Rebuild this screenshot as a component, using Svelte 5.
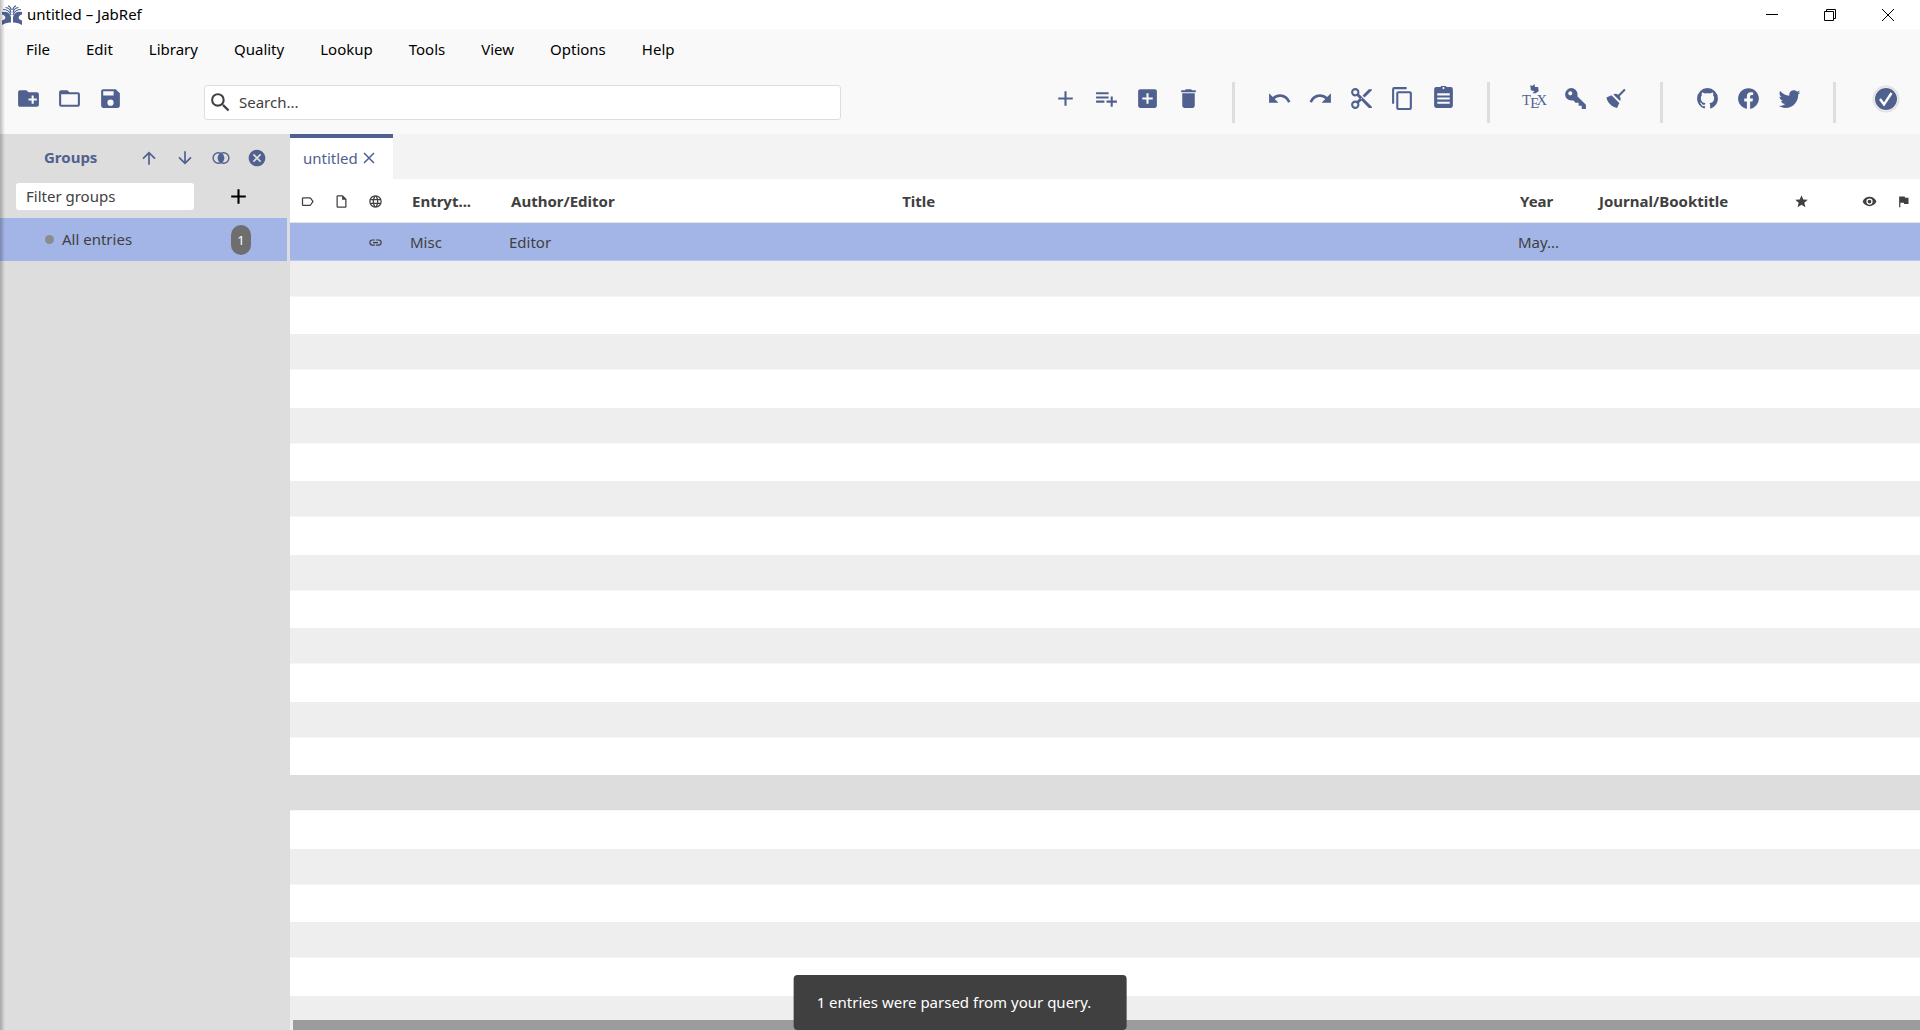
<script>
  const menus = ['File', 'Edit', 'Library', 'Quality', 'Lookup', 'Tools', 'View', 'Options', 'Help'];

  const icons = {
    newLibrary: 'M10,4L12,6H20A2,2 0 0,1 22,8V18A2,2 0 0,1 20,20H4C2.89,20 2,19.1 2,18V6C2,4.89 2.89,4 4,4H10M15,9V12H12V14H15V17H17V14H20V12H17V9H15Z',
    open: 'M20,18H4V8H20M20,6H12L10,4H4C2.89,4 2,4.89 2,6V18A2,2 0 0,0 4,20H20A2,2 0 0,0 22,18V8C22,6.89 21.1,6 20,6Z',
    save: 'M15,9H5V5H15M12,19A3,3 0 0,1 9,16A3,3 0 0,1 12,13A3,3 0 0,1 15,16A3,3 0 0,1 12,19M17,3H5C3.89,3 3,3.9 3,5V19A2,2 0 0,0 5,21H19A2,2 0 0,0 21,19V7L17,3Z',
    magnify: 'M9.5,3A6.5,6.5 0 0,1 16,9.5C16,11.11 15.41,12.59 14.44,13.73L14.71,14H15.5L20.5,19L19,20.5L14,15.5V14.71L13.73,14.44C12.59,15.41 11.11,16 9.5,16A6.5,6.5 0 0,1 3,9.5A6.5,6.5 0 0,1 9.5,3M9.5,5C7,5 5,7 5,9.5C5,12 7,14 9.5,14C12,14 14,12 14,9.5C14,7 12,5 9.5,5Z',
    plus: 'M19,13H13V19H11V13H5V11H11V5H13V11H19V13Z',
    playlistPlus: 'M2,16H10V14H2M18,14V10H16V14H12V16H16V20H18V16H22V14M14,6H2V8H14M14,10H2V12H14V10Z',
    plusBox: 'M17,13H13V17H11V13H7V11H11V7H13V11H17M19,3H5C3.89,3 3,3.89 3,5V19A2,2 0 0,0 5,21H19A2,2 0 0,0 21,19V5C21,3.89 20.1,3 19,3Z',
    trash: 'M19,4H15.5L14.5,3H9.5L8.5,4H5V6H19M6,19A2,2 0 0,0 8,21H16A2,2 0 0,0 18,19V7H6V19Z',
    undo: 'M12.5,8C9.85,8 7.45,9 5.6,10.6L2,7V16H11L7.38,12.38C8.77,11.22 10.54,10.5 12.5,10.5C16.04,10.5 19.05,12.81 20.1,16L22.47,15.22C21.08,11.03 17.15,8 12.5,8Z',
    redo: 'M18.4,10.6C16.55,9 14.15,8 11.5,8C6.85,8 2.92,11.03 1.54,15.22L3.9,16C4.95,12.81 7.95,10.5 11.5,10.5C13.45,10.5 15.23,11.22 16.62,12.38L13,16H22V7L18.4,10.6Z',
    cut: 'M19,3L13,9L15,11L22,4V3M12,12.5A0.5,0.5 0 0,1 11.5,12A0.5,0.5 0 0,1 12,11.5A0.5,0.5 0 0,1 12.5,12A0.5,0.5 0 0,1 12,12.5M6,20A2,2 0 0,1 4,18C4,16.89 4.9,16 6,16A2,2 0 0,1 8,18C8,19.11 7.1,20 6,20M6,8A2,2 0 0,1 4,6C4,4.89 4.9,4 6,4A2,2 0 0,1 8,6C8,7.11 7.1,8 6,8M9.64,7.64C9.87,7.14 10,6.59 10,6A4,4 0 0,0 6,2A4,4 0 0,0 2,6A4,4 0 0,0 6,10C6.59,10 7.14,9.87 7.64,9.64L10,12L7.64,14.36C7.14,14.13 6.59,14 6,14A4,4 0 0,0 2,18A4,4 0 0,0 6,22A4,4 0 0,0 10,18C10,17.41 9.87,16.86 9.64,16.36L12,14L19,21H22V20L9.64,7.64Z',
    copy: 'M19,21H8V7H19M19,5H8A2,2 0 0,0 6,7V21A2,2 0 0,0 8,23H19A2,2 0 0,0 21,21V7A2,2 0 0,0 19,5M16,1H4A2,2 0 0,0 2,3V17H4V3H16V1Z',
    paste: 'M19,1H14.8A3,3 0 0,0 9.2,1H5A2,2 0 0,0 3,3V19A2,2 0 0,0 5,21H19A2,2 0 0,0 21,19V3A2,2 0 0,0 19,1M12,1A1,1 0 1,1 12,3A1,1 0 1,1 12,1M6,7H18V9H6M6,11H18V13H6M6,15H18V17H6Z',
    key: 'M22,18V22H18V19H15V16H12L9.74,13.74C9.19,13.91 8.61,14 8,14A6,6 0 0,1 2,8A6,6 0 0,1 8,2A6,6 0 0,1 14,8C14,8.61 13.91,9.19 13.74,9.74L22,18M7,5A2,2 0 0,0 5,7A2,2 0 0,0 7,9A2,2 0 0,0 9,7A2,2 0 0,0 7,5Z',
    broom: 'M19.36,2.72L20.78,4.14L15.06,9.85C16.13,11.39 16.28,13.24 15.38,14.44L9.06,8.12C10.26,7.22 12.11,7.37 13.65,8.44L19.36,2.72M5.93,17.57C3.92,15.56 2.69,13.16 2.35,10.92L7.23,8.83L14.67,16.27L12.58,21.15C10.34,20.81 7.94,19.58 5.93,17.57Z',
    github: 'M12,2A10,10 0 0,0 2,12C2,16.42 4.87,20.17 8.84,21.5C9.34,21.58 9.5,21.27 9.5,21C9.5,20.77 9.5,20.14 9.5,19.31C6.73,19.91 6.14,17.97 6.14,17.97C5.68,16.81 5.03,16.5 5.03,16.5C4.12,15.88 5.1,15.9 5.1,15.9C6.1,15.97 6.63,16.93 6.63,16.93C7.5,18.45 8.97,18 9.54,17.76C9.63,17.11 9.89,16.67 10.17,16.42C7.95,16.17 5.62,15.31 5.62,11.5C5.62,10.39 6,9.5 6.65,8.79C6.55,8.54 6.2,7.5 6.75,6.15C6.75,6.15 7.59,5.88 9.5,7.17C10.29,6.95 11.15,6.84 12,6.84C12.85,6.84 13.71,6.95 14.5,7.17C16.41,5.88 17.25,6.15 17.25,6.15C17.8,7.5 17.45,8.54 17.35,8.79C18,9.5 18.38,10.39 18.38,11.5C18.38,15.32 16.04,16.16 13.81,16.41C14.17,16.72 14.5,17.33 14.5,18.26C14.5,19.6 14.5,20.68 14.5,21C14.5,21.27 14.66,21.59 15.17,21.5C19.14,20.16 22,16.42 22,12A10,10 0 0,0 12,2Z',
    facebook: 'M12,2.04C6.5,2.04 2,6.53 2,12.06C2,17.06 5.66,21.21 10.44,21.96V14.96H7.9V12.06H10.44V9.85C10.44,7.34 11.93,5.96 14.22,5.96C15.31,5.96 16.45,6.15 16.45,6.15V8.62H15.19C13.95,8.62 13.56,9.39 13.56,10.18V12.06H16.34L15.89,14.96H13.56V21.96A10,10 0 0,0 22,12.06C22,6.53 17.5,2.04 12,2.04Z',
    twitter: 'M22.46,6C21.69,6.35 20.86,6.58 20,6.69C20.88,6.16 21.56,5.32 21.88,4.31C21.05,4.81 20.13,5.16 19.16,5.36C18.37,4.5 17.26,4 16,4C13.65,4 11.73,5.92 11.73,8.29C11.73,8.63 11.77,8.96 11.84,9.27C8.28,9.09 5.11,7.38 3,4.79C2.63,5.42 2.42,6.16 2.42,6.94C2.42,8.43 3.17,9.75 4.33,10.5C3.62,10.5 2.96,10.3 2.38,10V10.03C2.38,12.11 3.86,13.85 5.82,14.24C5.46,14.34 5.08,14.39 4.69,14.39C4.42,14.39 4.15,14.36 3.89,14.31C4.43,16 6,17.26 7.89,17.29C6.43,18.45 4.58,19.13 2.56,19.13C2.22,19.13 1.88,19.11 1.54,19.07C3.44,20.29 5.7,21 8.12,21C16,21 20.33,14.46 20.33,8.79C20.33,8.6 20.33,8.42 20.32,8.23C21.16,7.63 21.88,6.87 22.46,6Z',
    arrowUp: 'M13,20H11V8L5.5,13.5L4.08,12.08L12,4.16L19.92,12.08L18.5,13.5L13,8V20Z',
    arrowDown: 'M11,4H13V16L18.5,10.5L19.92,11.92L12,19.84L4.08,11.92L5.5,10.5L11,16V4Z',
    closeCircle: 'M12,2C17.53,2 22,6.47 22,12C22,17.53 17.53,22 12,22C6.47,22 2,17.53 2,12C2,6.47 6.47,2 12,2M15.59,7L12,10.59L8.41,7L7,8.41L10.59,12L7,15.59L8.41,17L12,13.41L15.59,17L17,15.59L13.41,12L17,8.41L15.59,7Z',
    label: 'M16,17H5V7H16L19.55,12M17.63,5.84C17.27,5.33 16.67,5 16,5H5A2,2 0 0,0 3,7V17A2,2 0 0,0 5,19H16C16.67,19 17.27,18.66 17.63,18.15L22,12L17.63,5.84Z',
    file: 'M14,2H6A2,2 0 0,0 4,4V20A2,2 0 0,0 6,22H18A2,2 0 0,0 20,20V8L14,2M18,20H6V4H13V9H18V20Z',
    web: 'M16.36,14C16.44,13.34 16.5,12.68 16.5,12C16.5,11.32 16.44,10.66 16.36,10H19.74C19.9,10.64 20,11.31 20,12C20,12.69 19.9,13.36 19.74,14M14.59,19.56C15.19,18.45 15.65,17.25 15.97,16H18.92C17.96,17.65 16.43,18.93 14.59,19.56M14.34,14H9.66C9.56,13.34 9.5,12.68 9.5,12C9.5,11.32 9.56,10.65 9.66,10H14.34C14.43,10.65 14.5,11.32 14.5,12C14.5,12.68 14.43,13.34 14.34,14M12,19.96C11.17,18.76 10.5,17.43 10.09,16H13.91C13.5,17.43 12.83,18.76 12,19.96M8,8H5.08C6.03,6.34 7.57,5.06 9.4,4.44C8.8,5.55 8.35,6.75 8,8M5.08,16H8C8.35,17.25 8.8,18.45 9.4,19.56C7.57,18.93 6.03,17.65 5.08,16M4.26,14C4.1,13.36 4,12.69 4,12C4,11.31 4.1,10.64 4.26,10H7.64C7.56,10.66 7.5,11.32 7.5,12C7.5,12.68 7.56,13.34 7.64,14M12,4.03C12.83,5.23 13.5,6.57 13.91,8H10.09C10.5,6.57 11.17,5.23 12,4.03M18.92,8H15.97C15.65,6.75 15.19,5.55 14.59,4.44C16.43,5.07 17.96,6.34 18.92,8M12,2C6.47,2 2,6.5 2,12A10,10 0 0,0 12,22A10,10 0 0,0 22,12A10,10 0 0,0 12,2Z',
    link: 'M3.9,12C3.9,10.29 5.29,8.9 7,8.9H11V7H7A5,5 0 0,0 2,12A5,5 0 0,0 7,17H11V15.1H7C5.29,15.1 3.9,13.71 3.9,12M8,13H16V11H8V13M17,7H13V8.9H17C18.71,8.9 20.1,10.29 20.1,12C20.1,13.71 18.71,15.1 17,15.1H13V17H17A5,5 0 0,0 22,12A5,5 0 0,0 17,7Z',
    star: 'M12,17.27L18.18,21L16.54,13.97L22,9.24L14.81,8.62L12,2L9.19,8.62L2,9.24L7.45,13.97L5.82,21L12,17.27Z',
    eye: 'M12,9A3,3 0 0,0 9,12A3,3 0 0,0 12,15A3,3 0 0,0 15,12A3,3 0 0,0 12,9M12,17A5,5 0 0,1 7,12A5,5 0 0,1 12,7A5,5 0 0,1 17,12A5,5 0 0,1 12,17M12,4.5C7,4.5 2.73,7.61 1,12C2.73,16.39 7,19.5 12,19.5C17,19.5 21.27,16.39 23,12C21.27,7.61 17,4.5 12,4.5Z',
    flag: 'M14.4,6L14,4H5V21H7V14H12.6L13,16H20V6H14.4Z'
  };

  const fileTools = [
    ['New library', 'newLibrary'],
    ['Open library', 'open'],
    ['Save library', 'save']
  ];

  const toolGroups = [
    [['New article', 'plus'], ['New entry', 'playlistPlus'], ['New entry from plain text', 'plusBox'], ['Delete entry', 'trash']],
    [['Undo', 'undo'], ['Redo', 'redo'], ['Cut', 'cut'], ['Copy', 'copy'], ['Paste', 'paste']],
    [['Push to TeX editor', 'tex'], ['Generate citation key', 'key'], ['Cleanup entries', 'broom']],
    [['GitHub', 'github'], ['Facebook', 'facebook'], ['Twitter', 'twitter']]
  ];

  const emptyRows = Array.from({ length: 21 }, (_, i) => i);
  const hoveredRow = 14;

  let search = $state('');
  let groupFilter = $state('');
</script>

{#snippet icon(name, size)}
  <svg class="icon {size}" viewBox="0 0 24 24" aria-hidden="true">
    <path d={icons[name]} fill-rule="evenodd" />
  </svg>
{/snippet}

<div class="window">
  <header class="titlebar">
    <svg class="logo" viewBox="0 0 20 20" aria-hidden="true">
      <path d="M0,7Q7,5.5 9,12V17.500Q4,17 0,20V15.500Q4.500,14 3,11.500Q2,9.500 0,9.500Z" />
      <path d="M20,7Q13,5.5 11,12V17.500Q16,17 20,20V15.500Q15.500,14 17,11.500Q18,9.500 20,9.500Z" />
      <path class="pages" d="M1,4.500Q7,4.500 9,10M3.500,2.500Q8,3 9,7.500M6,0.700Q9,2 9.200,5M19,4.500Q13,4.500 11,10M16.500,2.500Q12,3 11,7.500M14,0.700Q11,2 10.800,5" />
    </svg>
    <span class="title">untitled – JabRef</span>
    <div class="window-buttons">
      <button aria-label="Minimize"><svg viewBox="0 0 12 12"><path d="M0,5.500H12" /></svg></button>
      <button aria-label="Restore"><svg viewBox="0 0 12 12"><path d="M0.500,2.500H9.500V11.500H0.500ZM2.500,2.500V0.500H11.500V9.500H9.500" /></svg></button>
      <button aria-label="Close"><svg viewBox="0 0 12 12"><path d="M0,0L12,12M12,0L0,12" /></svg></button>
    </div>
  </header>

  <nav class="menubar">
    {#each menus as menu}
      <button>{menu}</button>
    {/each}
  </nav>

  <div class="toolbar">
    <div class="tools">
      {#each fileTools as [label, name]}
        <button aria-label={label}>{@render icon(name, 'large')}</button>
      {/each}
    </div>
    <label class="search">
      {@render icon('magnify', 'large')}
      <input type="text" aria-label="Search" placeholder="Search..." bind:value={search} />
    </label>
    <div class="actions">
      {#each toolGroups as group}
        <div class="tools">
          {#each group as [label, name]}
            <button aria-label={label}>
              {#if name === 'tex'}
                <svg class="tex" viewBox="0 0 24 24" aria-hidden="true">
                  <text x="0" y="18">T</text>
                  <text x="8" y="21">E</text>
                  <text x="14" y="18">X</text>
                  <path d="M8,-1L10,0L12,-2L12.500,1L15.500,1L16,5L13,7H10L12,5L8.500,4Z" />
                </svg>
              {:else}
                {@render icon(name, 'large')}
              {/if}
            </button>
          {/each}
        </div>
        <span class="divider"></span>
      {/each}
      <button class="check" aria-label="Integrity check">
        <svg viewBox="0 0 28 28" aria-hidden="true">
          <circle class="ring" cx="14" cy="14" r="12.500" />
          <circle cx="14" cy="14" r="11" />
          <path d="M8,14L12,19.500L19.500,8" />
        </svg>
      </button>
    </div>
  </div>

  <main>
    <aside>
      <div class="groups-header">
        <h2>Groups</h2>
        <button aria-label="Move up">{@render icon('arrowUp', 'medium')}</button>
        <button aria-label="Move down">{@render icon('arrowDown', 'medium')}</button>
        <button aria-label="Toggle intersection">
          <svg class="icon medium" viewBox="0 0 20 20" aria-hidden="true">
            <circle class="outline" cx="7.400" cy="10" r="5.300" />
            <circle class="outline" cx="12.600" cy="10" r="5.300" />
            <path d="M10,5A6.500,6.500 0 0,1 10,15A6.500,6.500 0 0,1 10,5Z" />
          </svg>
        </button>
        <button aria-label="Close groups">{@render icon('closeCircle', 'medium')}</button>
      </div>
      <div class="filter">
        <input type="text" aria-label="Filter groups" placeholder="Filter groups" bind:value={groupFilter} />
        <button aria-label="Add group">{@render icon('plus', 'large')}</button>
      </div>
      <button class="group">
        <span class="dot"></span>
        <span class="group-name">All entries</span>
        <span class="count">1</span>
      </button>
    </aside>

    <section class="library">
      <div class="tabs">
        <div class="tab">
          <span>untitled</span>
          <button aria-label="Close tab"><svg viewBox="0 0 12 12"><path d="M1,1L11,11M11,1L1,11" /></svg></button>
        </div>
      </div>
      <div class="table-area">
        <table>
          <colgroup>
            <col class="narrow" span="3" />
            <col class="type" />
            <col class="author" />
            <col />
            <col class="year" />
            <col class="journal" />
            <col class="narrow" span="4" />
          </colgroup>
          <thead>
            <tr>
              <th class="mark" aria-label="Groups">{@render icon('label', 'small')}</th>
              <th class="mark" aria-label="Files">{@render icon('file', 'small')}</th>
              <th class="mark" aria-label="Links">{@render icon('web', 'small')}</th>
              <th>Entryt...</th>
              <th>Author/Editor</th>
              <th>Title</th>
              <th>Year</th>
              <th class="journal-title">Journal/Booktitle</th>
              <th class="mark" aria-label="Ranking">{@render icon('star', 'small')}</th>
              <th></th>
              <th class="mark" aria-label="Read status">{@render icon('eye', 'small')}</th>
              <th class="mark" aria-label="Priority">{@render icon('flag', 'small')}</th>
            </tr>
          </thead>
          <tbody>
            <tr class="selected">
              <td></td>
              <td></td>
              <td class="mark">{@render icon('link', 'small')}</td>
              <td>Misc</td>
              <td>Editor</td>
              <td></td>
              <td>May...</td>
              <td></td>
              <td colspan="4"></td>
            </tr>
            {#each emptyRows as i}
              <tr class="empty" class:hovered={i === hoveredRow}><td colspan="12"></td></tr>
            {/each}
          </tbody>
        </table>
        <div class="scrollbar"></div>
      </div>
    </section>
  </main>

  <div class="toast" role="status">1 entries were parsed from your query.</div>
</div>

<style>
  :global(body) {
    margin: 0;
    overflow: hidden;
  }

  .window {
    position: relative;
    display: flex;
    flex-direction: column;
    height: 100vh;
    overflow: hidden;
    background: #f9f9f9;
    color: #404040;
    font-family: 'Noto Sans', 'Open Sans', sans-serif;
    font-size: 15px;
    line-height: 20px;
  }

  /* shadow along the window edge */
  .window::before {
    content: '';
    position: absolute;
    z-index: 1;
    top: 0;
    bottom: 0;
    left: 0;
    width: 5px;
    background: linear-gradient(to right, rgba(0, 0, 0, 0.25), transparent);
    pointer-events: none;
  }

  button {
    display: flex;
    align-items: center;
    justify-content: center;
    padding: 0;
    border: none;
    background: none;
    color: inherit;
    font: inherit;
  }

  input {
    min-width: 0;
    padding: 0;
    border: none;
    outline: none;
    background: none;
    color: #404040;
    font: inherit;
  }

  input::placeholder {
    color: #404040;
    opacity: 1;
  }

  .icon {
    display: block;
    flex: none;
    fill: currentColor;
  }

  .large {
    width: 25px;
    height: 25px;
  }

  .medium {
    width: 20px;
    height: 20px;
  }

  .small {
    width: 15px;
    height: 15px;
  }

  .titlebar {
    display: flex;
    align-items: center;
    height: 29px;
    padding-right: 3px;
    padding-left: 2px;
    background: #fff;
    color: #000;
  }

  .logo {
    width: 20px;
    height: 20px;
    margin-right: 5px;
    fill: #50618f;
  }

  .logo .pages {
    fill: none;
    stroke: #50618f;
    stroke-width: 1.2;
  }

  .title {
    flex: 1;
    padding-bottom: 2px;
  }

  .window-buttons {
    display: flex;
  }

  .window-buttons button {
    width: 58px;
    height: 29px;
  }

  .window-buttons svg {
    width: 12px;
    height: 12px;
    fill: none;
    stroke: #000;
  }

  .menubar {
    display: flex;
    gap: 36px;
    padding: 10px 26px;
    color: #000;
  }

  .toolbar {
    display: flex;
    align-items: center;
    height: 59px;
    padding: 0 20px 6px 8px;
    color: #50618f;
  }

  .tools {
    display: flex;
  }

  .tools button {
    width: 41px;
    height: 41px;
  }

  .search {
    display: flex;
    align-items: center;
    width: calc(33vw + 3px);
    height: 35px;
    margin-top: 8px;
    margin-left: 73px;
    box-sizing: border-box;
    padding-left: 3px;
    border: 1px solid #dedede;
    border-radius: 3px;
    background: #fff;
    color: #404040;
  }

  .search input {
    flex: 1;
    margin-left: 6px;
    padding-bottom: 2px;
  }

  .actions {
    display: flex;
    align-items: center;
    margin-left: auto;
  }

  .divider {
    width: 3px;
    height: 41px;
    margin: 7px 24px 0 23px;
    background: #dedede;
  }

  .tex {
    width: 25px;
    height: 25px;
    overflow: visible;
    fill: #50618f;
    font-family: 'Liberation Serif', serif;
    font-size: 14px;
  }

  .check {
    margin-left: 12px;
  }

  .check svg {
    width: 28px;
    height: 28px;
    fill: #50618f;
  }

  .check .ring {
    fill: #fff;
    stroke: #e2e2e2;
    stroke-width: 2;
  }

  .check path {
    fill: none;
    stroke: #fff;
    stroke-width: 2.4;
  }

  main {
    display: flex;
    flex: 1;
    min-height: 0;
  }

  aside {
    width: 290px;
    box-sizing: border-box;
    padding-right: 3px;
    background: #ddd;
  }

  .groups-header {
    display: flex;
    align-items: center;
    height: 48px;
    padding-right: 12px;
    padding-left: 44px;
    color: #50618f;
  }

  .groups-header h2 {
    flex: 1;
    margin: 0;
    padding-bottom: 2px;
    font-size: 15px;
    font-weight: 700;
  }

  .groups-header button {
    width: 36px;
    height: 36px;
  }

  .outline {
    fill: none;
    stroke: currentColor;
    stroke-width: 1.4;
  }

  .filter {
    display: flex;
    align-items: center;
    justify-content: space-between;
    height: 28px;
    padding: 0 36px 8px 16px;
    color: #000;
  }

  .filter input {
    width: 178px;
    height: 27px;
    box-sizing: border-box;
    padding: 0 10px;
    border-radius: 3px;
    background: #fff;
  }

  .group {
    width: 100%;
    height: 43px;
    padding: 0 36px 0 45px;
    background: #a3b5e6;
  }

  .dot {
    width: 9px;
    height: 9px;
    margin-right: 8px;
    border-radius: 50%;
    background: #8c8c8c;
  }

  .group-name {
    flex: 1;
    padding-bottom: 2px;
    text-align: left;
  }

  .count {
    width: 20px;
    padding: 5px 0;
    border-radius: 10px;
    background: #6e6e6e;
    color: #fff;
    font-size: 13px;
    text-align: center;
  }

  .library {
    display: flex;
    flex: 1;
    flex-direction: column;
    min-width: 0;
    background: #fff;
  }

  .tabs {
    display: flex;
    background: #f3f3f3;
  }

  .tab {
    display: flex;
    align-items: center;
    gap: 5px;
    height: 39px;
    padding: 0 18px 2px 13px;
    border-top: 4px solid #50618f;
    background: #fff;
    color: #50618f;
  }

  .tab svg {
    width: 12px;
    height: 12px;
    fill: none;
    stroke: currentColor;
    stroke-width: 1.5;
  }

  .table-area {
    position: relative;
    flex: 1;
    min-height: 0;
    overflow: hidden;
  }

  table {
    width: 100%;
    border-collapse: collapse;
    table-layout: fixed;
  }

  .narrow {
    width: 34px;
  }

  .type {
    width: 99px;
  }

  .author {
    width: 24%;
  }

  .year {
    width: 65px;
  }

  .journal {
    width: 219px;
  }

  th,
  td {
    padding: 0 0 0 18px;
    text-align: left;
    white-space: nowrap;
  }

  th {
    height: 44px;
    padding-left: 20px;
    font-weight: 700;
    box-shadow: inset 0 -1px #e6e6e6;
  }

  .mark {
    padding: 0;
  }

  .mark .icon {
    margin: 0 auto;
  }

  .journal-title {
    padding-left: 34px;
  }

  .selected {
    height: 38px;
    background: #a3b5e6;
  }

  .selected td {
    box-shadow: inset 0 -1px #b9c7ec;
  }

  .empty td {
    height: 36px;
    padding: 0;
  }

  .empty:nth-child(even) {
    background: #eee;
  }

  .empty:nth-child(even) td {
    box-shadow: inset 0 -1px #f6f6f6;
  }

  /* pale rows take up the rounding of the row height */
  .empty:nth-child(4n + 3) td {
    height: 37px;
  }

  .empty:nth-child(4n + 1) td {
    height: 38px;
  }

  .empty.hovered {
    background: #ddd;
  }

  .scrollbar {
    position: absolute;
    right: 0;
    bottom: 0;
    left: 3px;
    height: 10px;
    background: #9c9c9c;
  }

  .toast {
    position: absolute;
    bottom: 0;
    left: 50%;
    padding: 17px 35px 18px 23px;
    border-radius: 4px;
    background: #404040;
    color: #fff;
    transform: translateX(-50%);
  }
</style>
